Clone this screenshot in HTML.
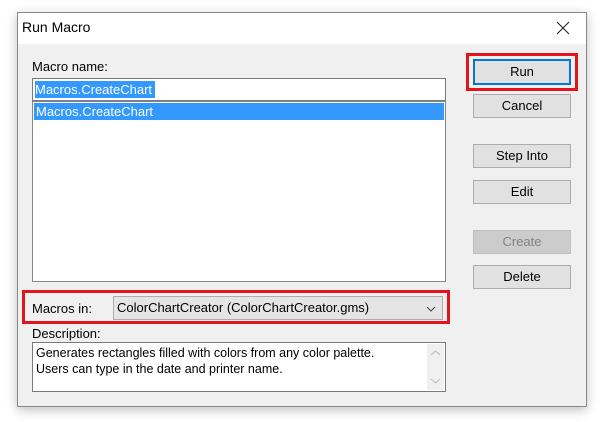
<!DOCTYPE html><html><head><style>
body{margin:0;width:605px;height:422px;background:#fff;position:relative;overflow:hidden;font-family:"Liberation Sans",sans-serif;font-size:13px;color:#000}
.a{position:absolute;box-sizing:border-box}
.btn{background:#e1e1e1;border:1px solid #adadad;text-align:center;line-height:22px;font-size:13px}
</style></head><body>
<div class="a" style="left:17px;top:12px;width:570px;height:395px;background:#f0f0f0;border:1px solid #888;box-shadow:0 3px 10px rgba(0,0,0,.25)"></div>
<div class="a" style="left:18px;top:13px;width:568px;height:31px;background:#fff"></div>
<div class="a" style="left:22px;top:19px;font-size:14px">Run Macro</div>
<div class="a" style="left:555px;top:14px">
<svg width="16" height="16" viewBox="0 0 16 16" style="margin-top:6px"><path d="M2 2L14 14M14 2L2 14" stroke="#222" stroke-width="1.1"/></svg></div>
<div class="a" style="left:32px;top:59px">Macro name:</div>
<div class="a" style="left:32px;top:78px;width:414px;height:23px;background:#fff;border:1px solid #7a7a7a"></div>
<div class="a" style="left:35px;top:81px;width:120px;height:17px;background:#3399ff;color:#fff;line-height:17px;font-size:13px">Macros.CreateChart</div>
<div class="a" style="left:32px;top:101px;width:414px;height:181px;background:#fff;border:1px solid #828790"></div>
<div class="a" style="left:34px;top:103px;width:410px;height:17px;background:#3399ff;color:#fff;line-height:17px;font-size:13px;padding-left:2px">Macros.CreateChart</div>
<div class="a" style="left:22px;top:290px;width:428px;height:34px;border:3px solid #e3141b"></div>
<div class="a" style="left:32px;top:301px">Macros in:</div>
<div class="a" style="left:113px;top:296px;width:330px;height:24px;background:#e5e5e5;border:1px solid #adadad;line-height:22px;padding-left:3px;font-size:13px">ColorChartCreator (ColorChartCreator.gms)
<svg width="10" height="6" style="position:absolute;right:6px;top:9px"><path d="M1 1L5 5L9 1" stroke="#444" fill="none"/></svg></div>
<div class="a" style="left:32px;top:326px">Description:</div>
<div class="a" style="left:32px;top:342px;width:414px;height:50px;background:#fff;border:1px solid #7a7a7a;padding:2px 0 0 3px;line-height:16px;font-size:12.5px">Generates rectangles filled with colors from any color palette.<br>Users can type in the date and printer name.
<div class="a" style="right:1px;top:1px;width:17px;height:46px;background:#f0f0f0">
<svg width="17" height="46" style="position:absolute;left:0;top:0"><path d="M4 11L8.5 7L13 11M4 35L8.5 39L13 35" stroke="#bbb" fill="none"/></svg></div></div>
<div class="a" style="left:466px;top:53px;width:112px;height:38px;border:3px solid #e3141b"></div>
<div class="a btn" style="left:473px;top:59px;width:98px;height:26px;border:2px solid #0078d7;line-height:22px">Run</div>
<div class="a btn" style="left:473px;top:94px;width:98px;height:24px">Cancel</div>
<div class="a btn" style="left:473px;top:144px;width:98px;height:24px">Step Into</div>
<div class="a btn" style="left:473px;top:180px;width:98px;height:24px">Edit</div>
<div class="a btn" style="left:473px;top:230px;width:98px;height:24px;background:#ccc;border-color:#bfbfbf;color:#838383">Create</div>
<div class="a btn" style="left:473px;top:265px;width:98px;height:24px">Delete</div>
</body></html>
